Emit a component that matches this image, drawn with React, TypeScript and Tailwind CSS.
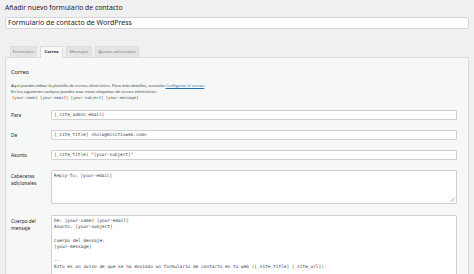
import React from "react";

const sans = { fontFamily: '"Noto Sans", "Open Sans", "Liberation Sans", sans-serif' };
const mono = { fontFamily: '"DejaVu Sans Mono", "Liberation Mono", monospace' };

function Field({ label, value }: { label: string; value: string }) {
  return (
    <div className="flex items-center h-[10px]">
      <div className="w-[40px] text-[4.8px] text-[#1d2327] leading-[6px]">{label}</div>
      <div
        className="flex-1 h-[10px] bg-white border border-[#cfd0d2] rounded-[1px] flex items-center pl-[2px] text-[4.4px] text-[#3c434a] whitespace-pre"
        style={mono}
      >
        {value}
      </div>
    </div>
  );
}

export default function App() {
  return (
    <div className="w-[474px] h-[274px] overflow-hidden bg-[#f0f0f1] pl-[5px] pr-[5px]" style={sans}>
      <div className="pt-[3px] h-[17px] text-[6.8px] leading-[10px] text-[#1d2327]">Añadir nuevo formulario de contacto</div>
      <div className="h-[12px] bg-white border border-[#d4d5d7] rounded-[2px] flex items-center pl-[2px] text-[7px] text-[#1d2327]">
        Formulario de contacto de WordPress
      </div>
      <div className="flex items-end h-[28px] pl-[5px] gap-[3px]">
        <div className="h-[11px] w-[27px] bg-[#e4e4e5] border border-[#dcdcde] border-b-0 flex items-center justify-center text-[4.2px] text-[#787c82]">Formulario</div>
        <div className="h-[12px] w-[23px] -mb-px relative z-10 bg-[#f6f7f7] border border-[#dcdcde] border-b-0 flex items-center justify-center text-[4.2px] font-bold text-[#1d2327]">Correo</div>
        <div className="h-[11px] w-[26px] bg-[#e4e4e5] border border-[#dcdcde] border-b-0 flex items-center justify-center text-[4.2px] text-[#787c82]">Mensajes</div>
        <div className="h-[11px] w-[44px] bg-[#e4e4e5] border border-[#dcdcde] border-b-0 flex items-center justify-center text-[4.2px] text-[#787c82]">Ajustes adicionales</div>
      </div>
      <div className="h-[240px] bg-[#f6f7f7] border border-[#dcdcde] pl-[5px] pr-[11px] pt-[11px]">
        <div className="text-[5.6px] leading-[7px] text-[#1d2327]">Correo</div>
        <div className="mt-[7px] text-[4.1px] leading-[5.6px] text-[#3c434a]">
          <div>
            Aquí puedes editar la plantilla de correo electrónico. Para más detalles, consulta{" "}
            <span className="text-[#2271b1] underline">Configurar el correo</span>.
          </div>
          <div>En los siguientes campos puedes usar estas etiquetas de correo electrónico:</div>
          <div className="pl-[1px] text-[3.9px] leading-[7px] text-[#50575e]" style={mono}>
            [your-name] [your-email] [your-subject] [your-message]
          </div>
        </div>
        <div className="mt-[9px] flex flex-col gap-[10px]">
          <Field label="Para" value="[_site_admin_email]" />
          <Field label="De" value="[_site_title] <hola@misitioweb.com>" />
          <Field label="Asunto" value={"[_site_title] \"[your-subject]\""} />
          <div className="flex">
            <div className="w-[40px] pt-[3px] text-[4.8px] leading-[6.4px] text-[#1d2327]">
              Cabeceras
              <br />
              adicionales
            </div>
            <div
              className="relative flex-1 h-[34px] bg-white border border-[#cfd0d2] rounded-[1px] pl-[2px] pt-[2px] text-[4.4px] leading-[6.6px] text-[#3c434a]"
              style={mono}
            >
              Reply-To: [your-email]
              <svg className="absolute right-[1px] bottom-[1px]" width="5" height="5" viewBox="0 0 5 5">
                <path d="M0.5 4.5 L4.5 0.5 M2.5 4.5 L4.5 2.5" stroke="#9ca0a6" strokeWidth="0.7" />
              </svg>
            </div>
          </div>
          <div className="flex mt-px">
            <div className="w-[40px] pt-[3px] text-[4.8px] leading-[6.4px] text-[#1d2327]">
              Cuerpo del
              <br />
              mensaje
            </div>
            <div
              className="flex-1 h-[80px] bg-white border border-[#cfd0d2] rounded-[1px] pl-[2px] pt-[1.5px] text-[4.45px] leading-[6.65px] text-[#3c434a] whitespace-pre"
              style={mono}
            >
              {"De: [your-name] [your-email]\nAsunto: [your-subject]\n\nCuerpo del mensaje:\n[your-message]\n\n--\nEsto es un aviso de que se ha enviado un formulario de contacto en tu web ([_site_title] [_site_url])."}
            </div>
          </div>
        </div>
      </div>
    </div>
  );
}
